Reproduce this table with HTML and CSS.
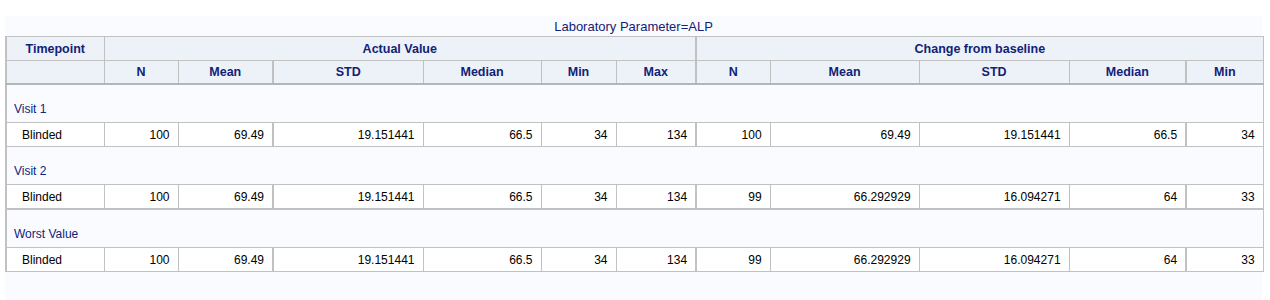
FILE: index.html
```html
<!DOCTYPE html>
<html>
<head>
<meta charset="utf-8">
<link rel="stylesheet" href="styles.css">
</head>
<body>
<div class="panel">
  <div class="byline">Laboratory Parameter=ALP</div>
  <table class="report">
    <colgroup>
      <col style="width:98px"><col style="width:74px"><col style="width:95px"><col style="width:150px">
      <col style="width:118px"><col style="width:75px"><col style="width:80px"><col style="width:74px">
      <col style="width:149px"><col style="width:150px"><col style="width:117px"><col style="width:77px">
    </colgroup>
    <thead>
      <tr class="h1">
        <th>Timepoint</th>
        <th colspan="6">Actual Value</th>
        <th colspan="5" class="tl">Change from baseline</th>
      </tr>
      <tr class="h2">
        <th></th>
        <th>N</th><th>Mean</th><th class="tl">STD</th><th>Median</th><th>Min</th><th>Max</th>
        <th class="tl">N</th><th>Mean</th><th>STD</th><th>Median</th><th class="tl">Min</th>
      </tr>
    </thead>
    <tbody>
      <tr class="grp"><td colspan="12">Visit 1</td></tr>
      <tr class="data">
        <td class="lbl">Blinded</td><td>100</td><td>69.49</td><td class="tl">19.151441</td><td>66.5</td><td>34</td><td>134</td>
        <td class="tl">100</td><td>69.49</td><td>19.151441</td><td>66.5</td><td class="tl">34</td>
      </tr>
      <tr class="grp"><td colspan="12">Visit 2</td></tr>
      <tr class="data">
        <td class="lbl">Blinded</td><td>100</td><td>69.49</td><td class="tl">19.151441</td><td>66.5</td><td>34</td><td>134</td>
        <td class="tl">99</td><td>66.292929</td><td>16.094271</td><td>64</td><td class="tl">33</td>
      </tr>
      <tr class="grp thick"><td colspan="12">Worst Value</td></tr>
      <tr class="data">
        <td class="lbl">Blinded</td><td>100</td><td>69.49</td><td class="tl">19.151441</td><td>66.5</td><td>34</td><td>134</td>
        <td class="tl">99</td><td>66.292929</td><td>16.094271</td><td>64</td><td class="tl">33</td>
      </tr>
    </tbody>
  </table>
</div>
</body>
</html>
```

FILE: styles.css
```css
html, body {
  margin: 0;
  padding: 0;
  background: #ffffff;
}
body {
  font-family: "Liberation Sans", Arial, sans-serif;
  overflow: hidden;
}
.panel {
  margin: 16px 0 0 5px;
  width: 1257px;
  height: 284px;
  background: #fafbfe;
}
.byline {
  height: 20px;
  line-height: 22px;
  text-align: center;
  font-size: 13px;
  color: #112277;
}
.report {
  width: 1257px;
  table-layout: fixed;
  border-collapse: collapse;
  border-left: 2px solid #c1c1c1;
  font-size: 12px;
}
.report th,
.report td {
  border: 1px solid #c1c1c1;
  padding: 0 8px;
  white-space: nowrap;
  overflow: hidden;
}
.report th {
  background: #edf2f9;
  color: #112277;
  font-weight: bold;
  font-size: 12.5px;
  text-align: center;
  height: 23px;
}
.report .h2 th {
  border-bottom: 2px solid #b0b7bb;
  height: 22px;
}
.report th:first-child,
.report td:first-child {
  border-left: 2px solid #c1c1c1;
}
.report .tl {
  border-left: 2px solid #c1c1c1;
}
.report .grp td {
  background: #fafbfe;
  color: #112277;
  text-align: left;
  vertical-align: bottom;
  height: 31px;
  padding: 0 0 6px 7px;
}
.report .grp.thick td {
  border-top: 2px solid #c1c1c1;
}
.report .data td {
  background: #ffffff;
  color: #000000;
  text-align: right;
  height: 23px;
}
.report .data td.lbl {
  text-align: left;
  padding-left: 15px;
}
```
